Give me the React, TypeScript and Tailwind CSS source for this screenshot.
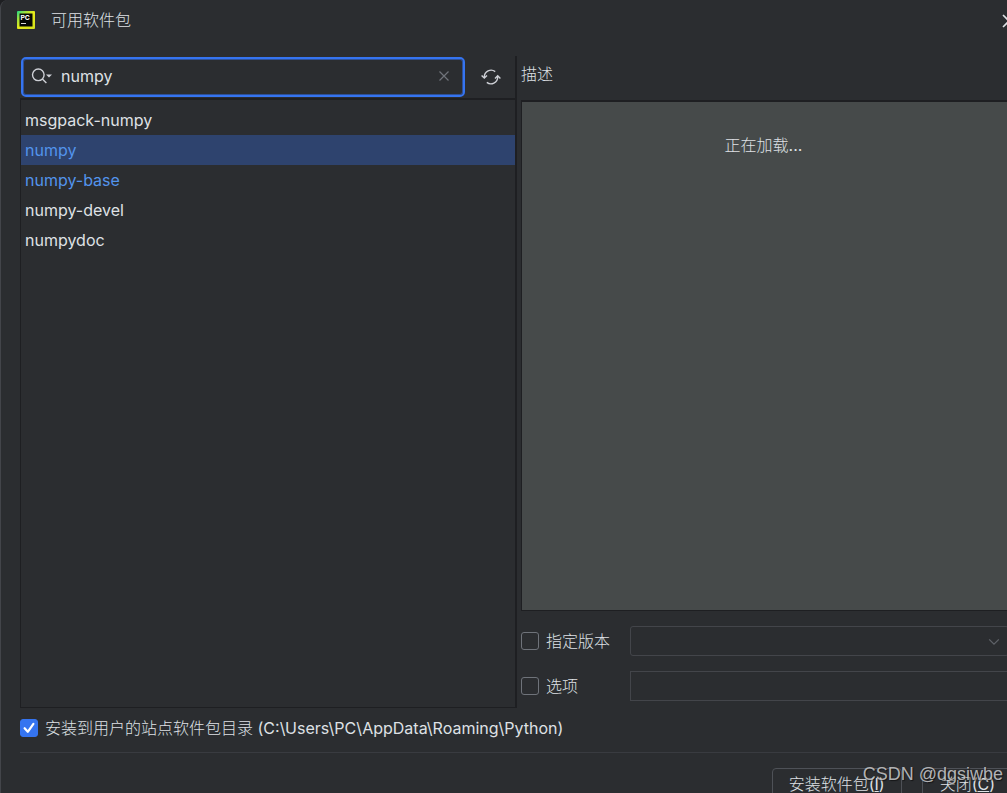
import { useState } from "react";

const PACKAGES = [
  { name: "msgpack-numpy", installed: false },
  { name: "numpy", installed: true },
  { name: "numpy-base", installed: true },
  { name: "numpy-devel", installed: false },
  { name: "numpydoc", installed: false },
];

function AppIcon() {
  return (
    <svg viewBox="0 0 18 18" className="size-[18px] shrink-0" aria-hidden="true">
      <defs>
        <linearGradient id="logo" x1="0" y1="0" x2="1" y2="1">
          <stop offset="0" stopColor="#21d789" />
          <stop offset="0.25" stopColor="#9be23f" />
          <stop offset="0.5" stopColor="#e6ea1a" />
          <stop offset="1" stopColor="#d3e01c" />
        </linearGradient>
      </defs>
      <rect width="18" height="18" rx="1" fill="url(#logo)" />
      <rect x="2.5" y="2.5" width="13" height="13" fill="#050805" />
      <text x="3.4" y="8.8" fontSize="6.8" fontWeight="700" fontFamily="Inter, sans-serif" fill="#fff">
        PC
      </text>
      <rect x="4" y="12" width="5" height="1" fill="#d8d8d8" />
    </svg>
  );
}

function SearchIcon() {
  return (
    <svg viewBox="0 0 22 18" className="h-[18px] w-[22px] shrink-0" fill="none" aria-hidden="true">
      <circle cx="7.3" cy="7.8" r="5.8" stroke="#ced0d6" strokeWidth="1.4" />
      <path d="M11.4 11.9L15.4 15.9" stroke="#ced0d6" strokeWidth="1.4" />
      <path d="M15 7.4H21L18 10.4Z" fill="#ced0d6" />
    </svg>
  );
}

function RefreshIcon() {
  return (
    <svg viewBox="0 0 20 18" className="h-[18px] w-5" fill="none" stroke="#ced0d6" strokeWidth="1.4" aria-hidden="true">
      <path d="M3.3 9.6V9A6.8 6.8 0 0 1 14.2 3.6" />
      <path d="M0.6 7.4L3.3 10.1L6 7.4" />
      <path d="M16.7 8.2V9A6.8 6.8 0 0 1 5.8 14.4" />
      <path d="M14 10.5L16.7 7.8L19.4 10.5" />
    </svg>
  );
}

function Cross({ className }: { className: string }) {
  return (
    <svg viewBox="0 0 12 12" className={className} fill="none" stroke="currentColor" strokeWidth="1.2" aria-hidden="true">
      <path d="M1.5 1.5L10.5 10.5M10.5 1.5L1.5 10.5" />
    </svg>
  );
}

type CheckProps = { label: string; defaultChecked?: boolean };

function Check({ label, defaultChecked }: CheckProps) {
  return (
    <label className="flex items-center gap-[7px] whitespace-nowrap">
      <span className="relative flex size-[18px] shrink-0">
        <input
          type="checkbox"
          defaultChecked={defaultChecked}
          className="peer size-[18px] appearance-none rounded-[3px] border border-[#6f737a] checked:border-[#3574f0] checked:bg-[#3574f0]"
        />
        <svg
          viewBox="0 0 18 18"
          className="pointer-events-none absolute inset-0 hidden peer-checked:block"
          fill="none"
          stroke="#fff"
          strokeWidth="2.2"
          strokeLinecap="round"
          strokeLinejoin="round"
          aria-hidden="true"
        >
          <path d="M4.6 9.2L7.8 12.8L13.4 4.8" />
        </svg>
      </span>
      <span>{label}</span>
    </label>
  );
}

export default function App() {
  const [query, setQuery] = useState("numpy");
  const [selected, setSelected] = useState("numpy");

  return (
    <div className="bg-[#1e1f22]">
      <div className="relative flex h-screen flex-col overflow-hidden rounded-tl-lg border-l border-[#43454a] bg-[#2b2d30] pl-[19px] font-['Inter','Noto_Sans_CJK_SC_Light','Noto_Sans_CJK_SC',sans-serif] text-base leading-6 text-[#dfe1e5]">
        <header className="-mr-2.5 flex h-14 shrink-0 items-start justify-between">
          <div className="-ml-[3px] flex h-10 items-center gap-4">
            <AppIcon />
            <h1>可用软件包</h1>
          </div>
          <button type="button" aria-label="关闭窗口" className="flex h-[42px] items-center">
            <Cross className="size-4" />
          </button>
        </header>

        <main className="-mr-0.5 flex min-h-0 flex-1 gap-1">
          <section className="flex w-[497px] shrink-0 flex-col border-r-2 border-[#1e1f22]">
            <div className="flex h-[42px] shrink-0 items-center pl-px">
              <div className="flex h-10 flex-1 items-center rounded-[5px] border-2 border-[#3574f0] pr-[13px] pb-0.5 pl-2 shadow-[inset_0_0_0_1px_#2f5096]">
                <SearchIcon />
                <input
                  type="text"
                  aria-label="搜索"
                  value={query}
                  onChange={(e) => setQuery(e.target.value)}
                  className="ml-2 min-w-0 flex-1 bg-transparent outline-none"
                />
                <button type="button" aria-label="清除" onClick={() => setQuery("")} className="text-[#6f737a]">
                  <Cross className="size-3" />
                </button>
              </div>
              <button type="button" aria-label="刷新" className="flex w-[50px] justify-center pl-0.5">
                <RefreshIcon />
              </button>
            </div>
            <ul className="flex-1 border-t-2 border-b border-l border-[#1e1f22] pt-[5px]">
              {PACKAGES.map((p) => (
                <li key={p.name} className={p.name === selected ? "bg-[#2e436e]" : ""}>
                  <button
                    type="button"
                    onClick={() => setSelected(p.name)}
                    className={
                      p.installed
                        ? "block h-[30px] w-full pl-1 text-left text-[#5394ec]"
                        : "block h-[30px] w-full pl-1 text-left"
                    }
                  >
                    {p.name}
                  </button>
                </li>
              ))}
            </ul>
          </section>

          <section className="flex min-w-0 flex-1 flex-col">
            <h2 className="flex h-11 shrink-0 items-center pb-2">描述</h2>
            <div className="flex-1 border-t-2 border-b border-l border-[#1e1f22] bg-[#464a4a] pt-[31px] pr-1 text-center">
              正在加载...
            </div>
            <div className="grid grid-cols-[109px_1fr] items-center gap-y-[15px] pt-[15px] pb-[7px]">
              <Check label="指定版本" />
              <div className="relative">
                <select
                  aria-label="版本"
                  className="block h-[30px] w-full appearance-none rounded-[3px] border border-[#43454a] bg-transparent"
                />
                <svg
                  viewBox="0 0 12 8"
                  className="pointer-events-none absolute top-3 right-[9px] h-2 w-3"
                  fill="none"
                  stroke="#5f6268"
                  strokeWidth="1.3"
                  aria-hidden="true"
                >
                  <path d="M1.2 1.4L6 6.2L10.8 1.4" />
                </svg>
              </div>
              <Check label="选项" />
              <input type="text" aria-label="选项" className="h-[30px] w-full border border-[#43454a] bg-transparent outline-none" />
            </div>
          </section>
        </main>

        <div className="flex h-11 shrink-0 items-center pb-1">
          <Check label="安装到用户的站点软件包目录 (C:\Users\PC\AppData\Roaming\Python)" defaultChecked />
        </div>

        <footer className="h-[41px] shrink-0 border-t border-[#393b40]">
          <div className="-mr-1.5 flex justify-end gap-5 pt-[15px]">
            <button type="button" className="h-8 rounded-[4px] border border-[#4e5157] px-4">
              安装软件包(<u>I</u>)
            </button>
            <button type="button" className="h-8 rounded-[4px] border border-[#4e5157] px-[17px]">
              关闭(<u>C</u>)
            </button>
          </div>
        </footer>

        <span className="pointer-events-none absolute right-1 bottom-[7px] font-['Liberation_Sans',sans-serif] text-lg leading-6 text-[#c4c5c7]/90 [text-shadow:1px_1px_1px_#0008]">
          CSDN @dgsiwbe
        </span>
      </div>
    </div>
  );
}
